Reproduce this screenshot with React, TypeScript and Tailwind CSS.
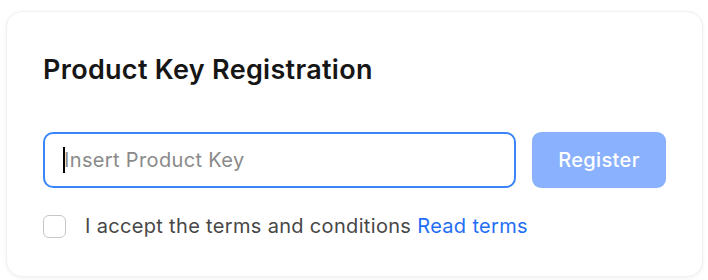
import { useState } from 'react'

const ProductKeyCard = () => {
    const [key, setKey] = useState('')
    const [accepted, setAccepted] = useState(false)

    return (
        <div className="w-[697px] h-[266px] rounded-[16px] bg-white border border-[#f1f1f1] shadow-[0_1px_4px_rgba(0,0,0,0.06)] px-9 pt-[40px]">
            <h2 className="text-[27px] leading-[36px] font-semibold text-[#161616] tracking-[0.3px]">
                Product Key Registration
            </h2>

            <div className="flex items-center gap-4 mt-[44px]">
                <div className="relative flex-1">
                    <input
                        value={key}
                        onChange={(e) => setKey(e.target.value)}
                        placeholder="Insert Product Key"
                        className="w-full h-[56px] rounded-[10px] border-2 border-[#3b86f7] px-[19px] text-[20px] tracking-[0.35px] text-[#222] placeholder:text-[#8a8a8a] outline-none caret-transparent"
                    />
                    {key === '' && (
                        <span className="absolute left-[20px] top-[15px] w-[2px] h-[26px] bg-black" />
                    )}
                </div>
                <button className="w-[134px] h-[56px] rounded-[9px] bg-[#8ab1fd] text-white text-[20px] tracking-[0.35px] font-medium">
                    Register
                </button>
            </div>

            <div className="flex items-center gap-[19px] mt-[24px]">
                <button
                    onClick={() => setAccepted(!accepted)}
                    className="w-[23px] h-[23px] rounded-[6px] border border-[#c6c6c6] bg-white"
                />
                <p className="text-[20px] leading-[28px] tracking-[0.33px] text-[#474747]">
                    I accept the terms and conditions{' '}
                    <a href="#" className="text-[#1f6ef5]">Read terms</a>
                </p>
            </div>
        </div>
    )
}

export default function App() {
    return (
        <div className="min-h-screen bg-white pt-[11px] pl-[6px] font-['Inter',sans-serif]">
            <ProductKeyCard />
        </div>
    )
}
